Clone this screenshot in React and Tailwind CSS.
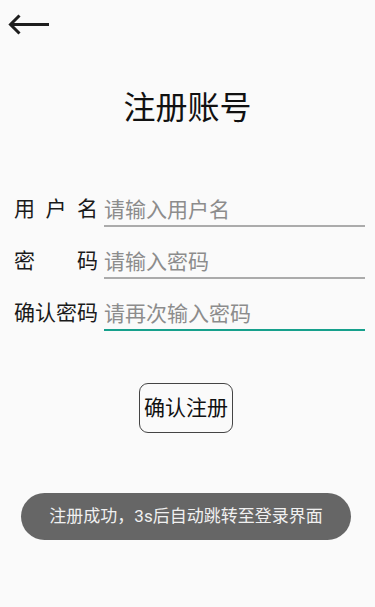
import React from "react";

function Row({ label, placeholder, focused }) {
  return (
    <div className="flex items-center">
      <div className="w-[84px] shrink-0 flex justify-between text-[21px] leading-none text-[#1a1a1a] -mt-[2px]">
        {label.map((c, i) => (
          <span key={i}>{c}</span>
        ))}
      </div>
      <input
        readOnly
        placeholder={placeholder}
        className={
          "ml-[6px] w-0 min-w-0 flex-1 h-[33px] bg-transparent outline-none p-0 text-[21px] leading-none placeholder:text-[#8c8c8c] border-b-2 " +
          (focused ? "border-[#16a08c]" : "border-[#ababab]")
        }
      />
    </div>
  );
}

export default function App() {
  return (
    <div className="relative w-full h-[607px] bg-[#fafafa] flex flex-col font-['Roboto','Noto_Sans_CJK_SC',sans-serif] overflow-hidden">
      <div className="pt-[14px] pl-[8px]">
        <svg width="42" height="22" viewBox="0 0 42 22" fill="none" stroke="#1e1e1e" strokeWidth="3">
          <path d="M2.5 10.5 H41" />
          <path d="M11.5 1.5 L2.5 10.5 L11.5 19.5" strokeLinejoin="miter" />
        </svg>
      </div>
      <div className="mt-[56px] text-center text-[32px] leading-none text-[#111]">注册账号</div>
      <div className="mt-[70px] pl-[14px] pr-[10px] flex flex-col gap-[19px]">
        <Row label={["用", "户", "名"]} placeholder="请输入用户名" />
        <Row label={["密", "码"]} placeholder="请输入密码" />
        <Row label={["确", "认", "密", "码"]} placeholder="请再次输入密码" focused />
      </div>
      <div className="mt-[52px] flex justify-center pr-[3px]">
        <button className="w-[94px] h-[50px] rounded-[9px] border border-[#444] text-[21px] leading-none text-[#111] bg-transparent">
          确认注册
        </button>
      </div>
      <div className="absolute left-[21px] top-[493px] w-[330px] h-[47px] rounded-full bg-[#666666] flex items-center justify-center text-[17px] text-[#f0f0f0]">
        注册成功，3s后自动跳转至登录界面
      </div>
    </div>
  );
}
